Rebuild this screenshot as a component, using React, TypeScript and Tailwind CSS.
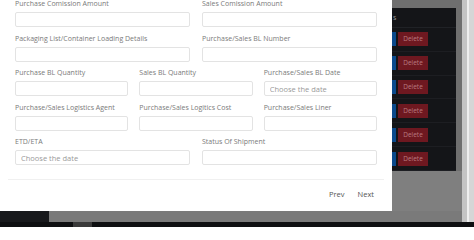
import React from "react";

type FieldProps = { label: string; placeholder?: string };

function Field({ label, placeholder }: FieldProps) {
  return (
    <div className="flex flex-col min-w-0">
      <label className="h-[10px] leading-[10px] text-[7px] text-[#7a7a7a] whitespace-nowrap mb-[3px]">{label}</label>
      <input
        readOnly
        placeholder={placeholder}
        className="h-[15px] w-full rounded-[2px] border border-[#e3e3e3] bg-white px-[5px] text-[7.5px] placeholder-[#9a9a9a] outline-none"
      />
    </div>
  );
}

const rows = [0, 1, 2, 3, 4, 5];

function App() {
  return (
    <div
      className="w-[474px] h-[227px] overflow-hidden bg-[#7f7f7f] flex flex-col"
      style={{ fontFamily: '"Open Sans", "Liberation Sans", sans-serif' }}
    >
      <div className="flex h-[222px]">
        <div className="flex flex-col w-[462px]">
          <div className="flex h-[211px]">
            {/* modal */}
            <div className="w-[392px] h-[211px] bg-white flex flex-col">
              <div className="flex flex-col gap-[6.5px] pl-[15px] pr-[15px] -mt-[1px]">
                <div className="grid grid-cols-2 gap-x-[12px]">
                  <Field label="Purchase Comission Amount" />
                  <Field label="Sales Comission Amount" />
                </div>
                <div className="grid grid-cols-2 gap-x-[12px]">
                  <Field label="Packaging List/Container Loading Details" />
                  <Field label="Purchase/Sales BL Number" />
                </div>
                <div className="grid grid-cols-3 gap-x-[11px]">
                  <Field label="Purchase BL Quantity" />
                  <Field label="Sales BL Quantity" />
                  <Field label="Purchase/Sales BL Date" placeholder="Choose the date" />
                </div>
                <div className="grid grid-cols-3 gap-x-[11px]">
                  <Field label="Purchase/Sales Logistics Agent" />
                  <Field label="Purchase/Sales Logitics Cost" />
                  <Field label="Purchase/Sales Liner" />
                </div>
                <div className="grid grid-cols-2 gap-x-[12px]">
                  <Field label="ETD/ETA" placeholder="Choose the date" />
                  <Field label="Status Of Shipment" />
                </div>
              </div>
              <div className="mx-[8px] mt-[14px] border-t border-[#f0f0f0]" />
              <div className="flex justify-end gap-[13px] pr-[18px] mt-[9px]">
                <span className="text-[7.5px] leading-[10px] text-[#555]">Prev</span>
                <span className="text-[7.5px] leading-[10px] text-[#555]">Next</span>
              </div>
            </div>
            {/* page behind overlay */}
            <div className="flex flex-col pt-[8px] bg-[#6f6f6f] w-[70px]">
              <div className="w-[64px] h-[163px] bg-[#141518] flex flex-col">
                <div className="h-[20px] border-b border-[#202226] flex items-center">
                  <span className="text-[7px] text-[#9a9a9a] leading-none ml-[1px]">s</span>
                </div>
                {rows.map((r) => (
                  <div key={r} className="h-[24px] border-b border-[#1d1e22] flex items-center gap-[2px]">
                    <span className="w-[4px] h-[14px] bg-[#0b4a8c]" />
                    <span className="w-[30px] h-[14px] bg-[#6e1820] text-[#b97a80] text-[6.5px] flex items-center justify-center">
                      Delete
                    </span>
                  </div>
                ))}
              </div>
              <div className="flex-1 bg-[#7f7f7f] -mx-0" />
            </div>
          </div>
          <div className="flex h-[11px]">
            <div className="w-[49px] bg-[#18191c]" />
            <div className="flex-1 bg-[#7a7a7a]" />
          </div>
        </div>
        {/* scrollbar */}
        <div className="flex w-[12px] bg-[#d2d2d2]">
          <div className="w-[5px] bg-[#c4c4c4]" />
          <div className="w-[2px] bg-[#efefef]" />
          <div className="flex-1 bg-[#d6d6d6]" />
        </div>
      </div>
      <div className="h-[5px] bg-[#0e0f11] flex">
        <div className="ml-[73px] w-[19px] bg-[#3a3a3a]" />
      </div>
    </div>
  );
}

export default App;
